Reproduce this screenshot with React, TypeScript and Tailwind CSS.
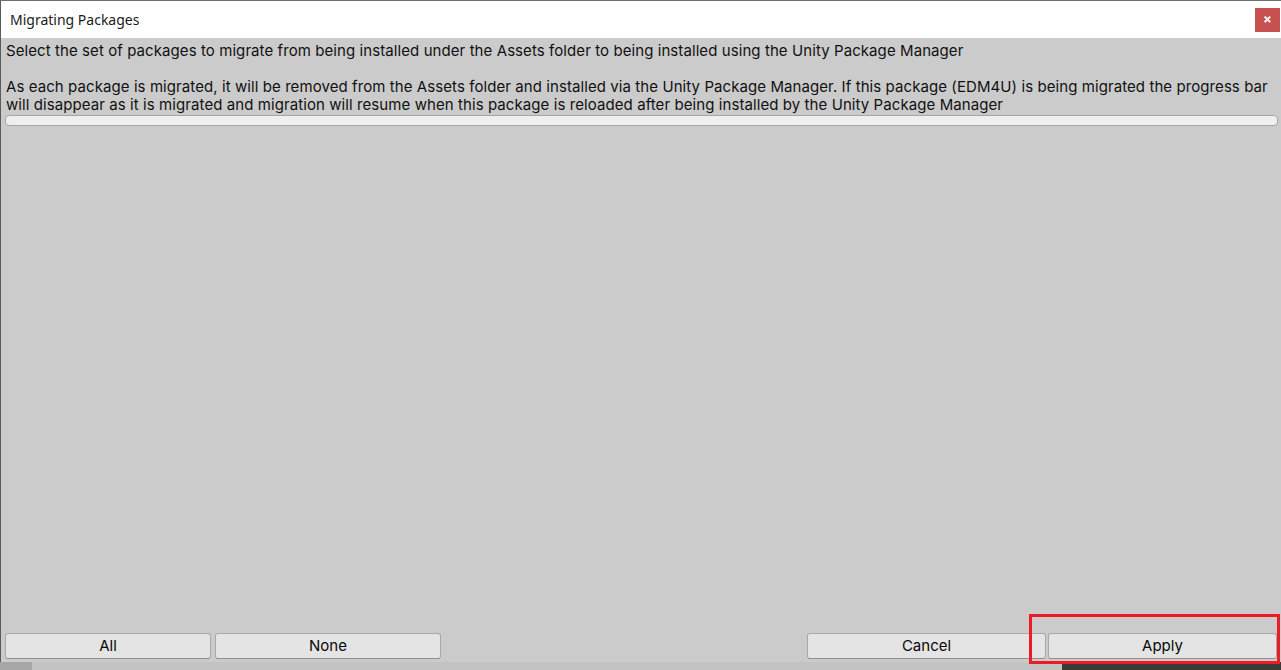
import React from "react";

function Btn({ label, className }: { label: string; className: string }) {
  return (
    <div
      className={`h-[26px] flex items-center justify-center rounded-[3px] border border-[#a9a9a9] border-b-[#8f8f8f] bg-[#e4e4e4] text-[15px] text-[#090909] pt-px ${className}`}
    >
      {label}
    </div>
  );
}

export default function App() {
  return (
    <div
      className="relative w-[1281px] h-[670px] overflow-hidden bg-[#c3c3c3]"
      style={{ fontFamily: "Inter, 'Noto Sans', sans-serif" }}
    >
      <div className="flex flex-col h-[662px] border-t border-[#6e6e6e] border-l border-l-[#5a5a5a] shadow-[0_2px_3px_rgba(0,0,0,0.25)]">
        <div className="h-[37px] bg-white flex items-center justify-between pl-[9px] pr-px shrink-0">
          <span className="text-[14px] text-[#1a1a1a]" style={{ fontFamily: "'Noto Sans', sans-serif" }}>
            Migrating Packages
          </span>
          <div className="w-[25px] h-[24px] bg-[#c75050] flex items-center justify-center text-white text-[13px] font-bold leading-none">
            ×
          </div>
        </div>
        <div className="flex-1 bg-[#cbcbcb] flex flex-col px-[4px] pt-[4px] pb-[3px]">
          <div className="text-[15px] leading-[18px] text-[#111111] pl-px tracking-[0.08px]">
            <p>Select the set of packages to migrate from being installed under the Assets folder to being installed using the Unity Package Manager</p>
            <p className="h-[18px]"></p>
            <p>
              As each package is migrated, it will be removed from the Assets folder and installed via the Unity Package Manager. If this package (EDM4U) is being migrated the progress bar will disappear as it is migrated and migration will resume when this package is reloaded after being installed by the Unity Package Manager
            </p>
          </div>
          <div className="mt-[1px] h-[11px] rounded-[4px] border border-[#a6a6a6] bg-[#efefef] mr-[-1px]"></div>
          <div className="flex-1"></div>
          <div className="flex items-center">
            <Btn label="All" className="w-[206px]" />
            <Btn label="None" className="w-[226px] ml-[4px]" />
            <div className="flex-1" />
            <Btn label="Cancel" className="w-[239px]" />
            <Btn label="Apply" className="w-[229px] ml-[2px]" />
          </div>
        </div>
      </div>
      <div className="flex h-[8px]">
        <div className="w-[32px] bg-[#a6a6a6]" />
        <div className="flex-1 bg-[#c3c3c3]" />
        <div className="w-[219px] bg-[#3a3a3a]" />
      </div>
      <div className="absolute left-[1029px] top-[614px] w-[251px] h-[50px] border-[3px] border-[#ed1c24]" />
    </div>
  );
}
